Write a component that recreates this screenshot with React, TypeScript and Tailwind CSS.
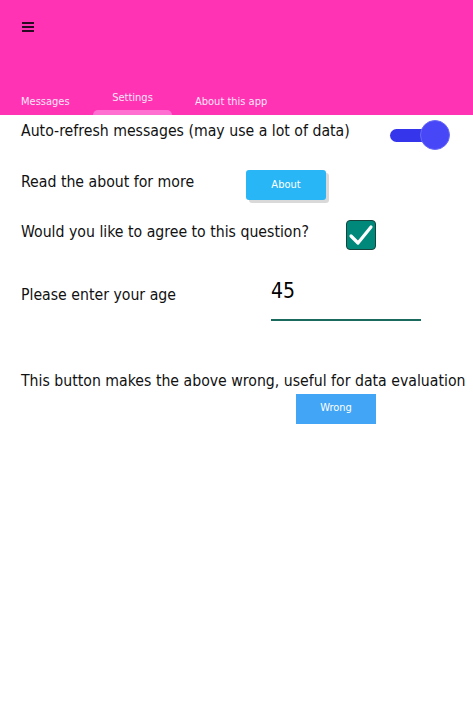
import { useState } from 'react';

const font = { fontFamily: '"DejaVu Sans Condensed", "DejaVu Sans", Tahoma, sans-serif' };

function Toggle({ on, onChange }: { on: boolean; onChange: (v: boolean) => void }) {
  return (
    <button
      onClick={() => onChange(!on)}
      className="relative w-[60px] h-[30px] flex items-center"
      aria-pressed={on}
    >
      <span className="block w-[44px] h-[13px] rounded-full bg-[#3535ec]" />
      <span
        className={`absolute top-0 h-[30px] w-[30px] rounded-full bg-[#4747f7] border border-[#6a6afa] ${
          on ? 'left-[30px]' : 'left-0'
        }`}
      />
    </button>
  );
}

export default function App() {
  const [autoRefresh, setAutoRefresh] = useState(true);
  const [agree, setAgree] = useState(true);
  const [age, setAge] = useState('45');

  return (
    <div className="w-[473px] h-[713px] bg-white text-[#111]" style={font}>
      {/* Header */}
      <div className="h-[115px] bg-[#ff33b4] flex flex-col">
        <div className="h-[88px] pl-[22px] pt-[22px]">
          <div className="flex flex-col gap-[2px] w-[12px]">
            <span className="block h-[2px] bg-[#2a0a22]" />
            <span className="block h-[2px] bg-[#2a0a22]" />
            <span className="block h-[2px] bg-[#2a0a22]" />
          </div>
        </div>
        {/* Tabs */}
        <div className="flex h-[27px] text-[11px] text-[#ffe6f6]">
          <div className="w-[93px] pl-[21px] pt-[6px]">Messages</div>
          <div className="w-[79px] flex flex-col items-center">
            <div className="h-[22px] pt-[2px]">Settings</div>
            <div className="h-[5px] w-full rounded-t-[5px] bg-[#ff6fd2]" />
          </div>
          <div className="pl-[23px] pt-[6px]">About this app</div>
        </div>
      </div>

      {/* Settings content */}
      <div className="flex items-center justify-between h-[30px] mt-[5px] pl-[21px] pr-[23px] text-[15.7px]">
        <span className="-mt-[8px]">Auto-refresh messages (may use a lot of data)</span>
        <Toggle on={autoRefresh} onChange={setAutoRefresh} />
      </div>

      <div className="flex items-start mt-[20px] pl-[21px] text-[15.7px]">
        <div className="w-[225px] pt-[0px]">Read the about for more</div>
        <button className="w-[80px] h-[30px] rounded-[3px] bg-[#29b6f6] text-white text-[11px] shadow-[3px_3px_0_#d9d9d9]">
          About
        </button>
      </div>

      <div className="flex items-start mt-[20px] pl-[21px] text-[15.7px]">
        <div className="w-[325px] pt-[0px]">Would you like to agree to this question?</div>
        <button
          onClick={() => setAgree(!agree)}
          className="w-[30px] h-[30px] rounded-[4px] bg-[#00897b] border border-[#16433b] flex items-center justify-center"
        >
          {agree && (
            <svg width="26" height="24" viewBox="0 0 26 24">
              <path d="M3 13 L10 20 L23 4" fill="none" stroke="white" strokeWidth="3.2" strokeLinecap="round" strokeLinejoin="round" />
            </svg>
          )}
        </button>
      </div>

      <div className="flex items-start mt-[24px] pl-[21px] text-[15.7px]">
        <div className="w-[250px] pt-[9px]">Please enter your age</div>
        <div className="w-[150px] border-b-2 border-[#1a6b5e]">
          <input
            autoFocus
            value={age}
            onChange={(e) => setAge(e.target.value)}
            className="w-full h-[45px] pb-[12px] bg-transparent outline-none text-[21px] text-black caret-black"
            style={font}
          />
        </div>
      </div>

      <div className="mt-[48px] pl-[21px] text-[15.7px] whitespace-nowrap">
        This button makes the above wrong, useful for data evaluation
      </div>
      <div className="mt-[1px] pl-[296px]">
        <button className="w-[80px] h-[30px] bg-[#42a5f5] text-white text-[11px]">Wrong</button>
      </div>
    </div>
  );
}
